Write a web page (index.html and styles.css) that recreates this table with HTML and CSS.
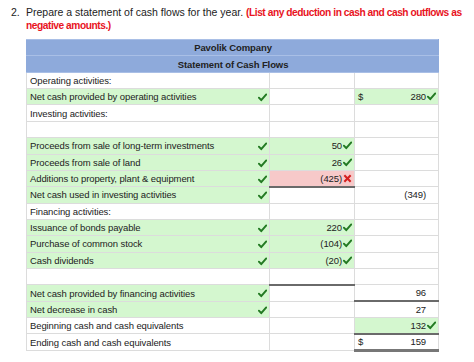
FILE: index.html
```html
<!DOCTYPE html>
<html lang="en">
<head>
    <meta charset="UTF-8">
    <link rel="stylesheet" href="styles.css">
    <title>Statement of Cash Flows</title>
</head>
<body>
    <div class="pregunta">
        <span class="orden">2.</span>
        <p>Prepare a statement of cash flows for the year. <b class="rojo">(List any deduction in cash and cash outflows as negative amounts.)</b></p>
    </div>
    <table class="estado">
        <colgroup>
            <col class="c1"><col class="c2"><col class="c3">
        </colgroup>
        <tr class="cab"><th colspan="3">Pavolik Company</th></tr>
        <tr class="cab"><th colspan="3">Statement of Cash Flows</th></tr>
        <tr><td>Operating activities:</td><td></td><td></td></tr>
        <tr><td class="ok">Net cash provided by operating activities<i class="chk"></i></td><td></td><td class="ok cifra"><span class="dol">$</span>280<i class="chk"></i></td></tr>
        <tr><td>Investing activities:</td><td></td><td></td></tr>
        <tr><td></td><td></td><td></td></tr>
        <tr><td class="ok">Proceeds from sale of long-term investments<i class="chk"></i></td><td class="ok cifra">50<i class="chk"></i></td><td></td></tr>
        <tr><td class="ok">Proceeds from sale of land<i class="chk"></i></td><td class="ok cifra">26<i class="chk"></i></td><td></td></tr>
        <tr><td class="ok">Additions to property, plant &amp; equipment<i class="chk"></i></td><td class="mal cifra linea">(425)<i class="equis"></i></td><td></td></tr>
        <tr><td class="ok">Net cash used in investing activities<i class="chk"></i></td><td></td><td class="cifra">(349)<i class="hueco"></i></td></tr>
        <tr><td>Financing activities:</td><td></td><td></td></tr>
        <tr><td class="ok">Issuance of bonds payable<i class="chk"></i></td><td class="ok cifra">220<i class="chk"></i></td><td></td></tr>
        <tr><td class="ok">Purchase of common stock<i class="chk"></i></td><td class="ok cifra">(104)<i class="chk"></i></td><td></td></tr>
        <tr><td class="ok">Cash dividends<i class="chk"></i></td><td class="ok cifra">(20)<i class="chk"></i></td><td></td></tr>
        <tr><td></td><td class="linea"></td><td></td></tr>
        <tr><td class="ok">Net cash provided by financing activities<i class="chk"></i></td><td></td><td class="cifra linea">96<i class="hueco"></i></td></tr>
        <tr><td class="ok">Net decrease in cash<i class="chk"></i></td><td></td><td class="cifra">27<i class="hueco"></i></td></tr>
        <tr><td>Beginning cash and cash equivalents</td><td></td><td class="ok cifra linea">132<i class="chk"></i></td></tr>
        <tr><td>Ending cash and cash equivalents</td><td></td><td class="cifra linea doble"><span class="dol">$</span>159<i class="hueco"></i></td></tr>
    </table>
</body>
</html>
```

FILE: styles.css
```css
*{
    margin: 0;
    padding: 0;
    box-sizing: border-box;
}
body{
    font-family: "Liberation Sans", Arial, sans-serif;
    font-size: 10.5px;
    color: #222;
    background: #fff;
}
.pregunta{
    display: flex;
    padding: 6px 4px 0 11px;
    line-height: 12px;
}
.orden{
    width: 15px;
    flex: none;
}
.rojo{
    color: #e8141e;
    font-size: 10.2px;
    letter-spacing: -0.45px;
}
.estado{
    margin: 7px 0 0 26px;
    border-collapse: collapse;
    table-layout: fixed;
    width: 412px;
    font-size: 9.5px;
    letter-spacing: -0.1px;
}
.c1{ width: 243px; }
.c2{ width: 85px; }
.c3{ width: 84px; }
.estado th, .estado td{
    height: 16.37px;
    border: 1px solid #dcdcdc;
    padding: 0 2px 0 3px;
    white-space: nowrap;
    position: relative;
}
.cab th{
    background: #8eaadb;
    font-weight: bold;
    text-align: center;
    border-color: #a9bfe6;
    border-left-color: #8eaadb;
    border-right-color: #8eaadb;
}
.ok{
    background: #d4f7cf;
}
.mal{
    background: #f7c9c9;
}
.cifra{
    text-align: right;
}
.linea{
    border-bottom: 2px solid #6a6a6a !important;
}
.doble{
    border-bottom: 3px solid #777 !important;
}
.dol{
    float: left;
    margin-left: 0;
}
.chk, .equis, .hueco{
    display: inline-block;
    width: 9px;
    height: 9px;
    margin-left: 1px;
    vertical-align: -1px;
}
td:first-child .chk{
    position: absolute;
    right: 2px;
    top: 4px;
}
.chk{
    background: url("data:image/svg+xml,%3Csvg xmlns='http://www.w3.org/2000/svg' viewBox='0 0 10 10'%3E%3Cpath d='M1 5.2 L3.6 8 L9.2 1.6' fill='none' stroke='%23237a23' stroke-width='2.2' stroke-linecap='round' stroke-linejoin='round'/%3E%3C/svg%3E") no-repeat center;
}
.equis{
    background: url("data:image/svg+xml,%3Csvg xmlns='http://www.w3.org/2000/svg' viewBox='0 0 10 10'%3E%3Cpath d='M1.5 1.5 L8.5 8.5 M8.5 1.5 L1.5 8.5' fill='none' stroke='%23d51f1f' stroke-width='2.3'/%3E%3C/svg%3E") no-repeat center;
}
```
